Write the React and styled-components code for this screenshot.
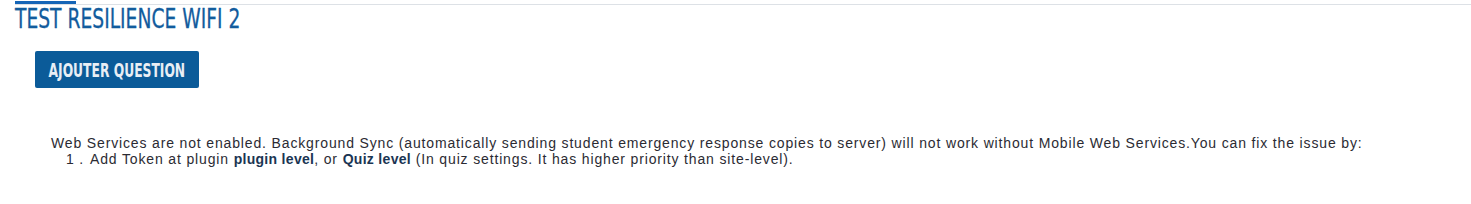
import React from "react";
import styled, { createGlobalStyle } from "styled-components";

const GlobalStyle = createGlobalStyle`
  body {
    margin: 0;
    background: #fff;
    font-family: "Liberation Sans", Arial, sans-serif;
  }
`;

const Page = styled.div`
  width: 1471px;
  height: 204px;
  background: #fff;
  overflow: hidden;
`;

const TitleBar = styled.div`
  margin: 1px 0 0 15px;
  border-bottom: 1px solid #dde1e6;
`;

const Tab = styled.div`
  width: 61px;
  height: 3px;
  background: #1565b7;
`;

// condensed display face: no narrow font installed, so squeeze horizontally
const Condensed = styled.span`
  display: inline-block;
  white-space: nowrap;
  font-family: "DejaVu Sans Condensed", "DejaVu Sans", sans-serif;
  transform: scaleX(${(p) => p.$scale});
  transform-origin: ${(p) => p.$origin || "left"};
`;

const Title = styled.h1`
  margin: 0 0 0 15px;
  font-weight: 400;
  font-size: 27px;
  line-height: 28px;
  color: #125c9d;
  -webkit-text-stroke: 0.3px #125c9d;
`;

const Actions = styled.div`
  padding: 18px 0 0 35px;
`;

const Button = styled.button`
  display: flex;
  align-items: center;
  justify-content: center;
  height: 37px;
  width: 164px;
  padding: 0;
  border: none;
  border-radius: 2px;
  background: #0b5b99;
  color: #e8eef5;
  font-weight: 700;
  font-size: 19px;
  overflow: hidden;
`;

const Notice = styled.div`
  padding: 47px 0 0 51px;
  font-size: 14px;
  letter-spacing: 0.85px;
  line-height: 16px;
  color: #2b2b33;
`;

const Steps = styled.ol`
  margin: 0;
  padding: 0 0 0 39px;
  list-style: none;
  counter-reset: step;

  > li {
    position: relative;
    counter-increment: step;
  }
  > li::before {
    content: counter(step) " .";
    position: absolute;
    right: 100%;
    margin-right: 6px;
    white-space: nowrap;
  }
`;

const Strong = styled.b`
  color: #1b3553;
  letter-spacing: 0.3px;
`;

export default function App() {
  return (
    <Page>
      <GlobalStyle />
      <TitleBar>
        <Tab />
      </TitleBar>
      <Title>
        <Condensed $scale={0.77}>TEST RESILIENCE WIFI 2</Condensed>
      </Title>
      <Actions>
        <Button>
          <Condensed $scale={0.72} $origin="center">
            AJOUTER QUESTION
          </Condensed>
        </Button>
      </Actions>
      <Notice>
        Web Services are not enabled. Background Sync (automatically sending
        student emergency response copies to server) will not work without
        Mobile Web Services.You can fix the issue by:
        <Steps>
          <li>
            Add Token at plugin <Strong>plugin level</Strong>, or{" "}
            <Strong>Quiz level</Strong> (In quiz settings. It has higher
            priority than site-level).
          </li>
        </Steps>
      </Notice>
    </Page>
  );
}
